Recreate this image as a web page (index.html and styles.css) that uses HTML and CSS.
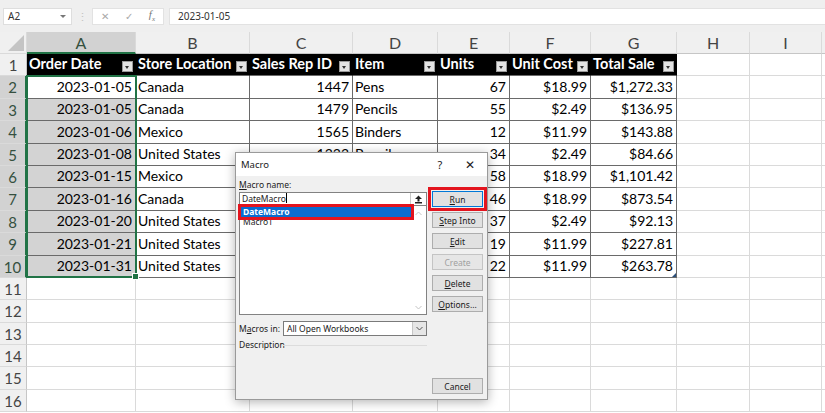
FILE: index.html
```html
<!DOCTYPE html>
<html lang="en">
    <head>
        <meta charset="UTF-8">
        <title>Macro</title>
        <link rel="stylesheet" href="styles.css">
    </head>
    <body>
        <div class="toolbar">
            <div class="namebox">A2<span class="namebox-arrow"></span></div>
            <div class="grip">⋮</div>
            <div class="fxbox">
                <span class="fx-icon">✕</span>
                <span class="fx-icon">✓</span>
                <span class="fx-icon fx">f<sub>x</sub></span>
            </div>
            <div class="formula">2023-01-05</div>
        </div>

        <div class="sheet">
            <div class="grid" id="grid"></div>
            <div class="selection"><span class="handle"></span></div>

            <div class="dialog">
                <div class="dlg-title">
                    <span class="dlg-name">Macro</span>
                    <span class="dlg-help">?</span>
                    <span class="dlg-close">✕</span>
                </div>
                <div class="dlg-body">
                    <div class="dlg-left">
                        <div class="dlg-label"><u>M</u>acro name:</div>
                        <div class="name-input">
                            <span class="name-text">DateMacro<i class="caret"></i></span>
                            <span class="collapse">
                                <svg width="9" height="9" viewBox="0 0 9 9"><path d="M4.5 0.5 L1 4 H8 Z M3.5 4 H5.5 V6.5 H3.5 Z M1 7 H8 V8.5 H1 Z" fill="#222"/></svg>
                            </span>
                        </div>
                        <div class="macro-list">
                            <div class="items">
                                <div class="item active">DateMacro</div>
                                <div class="item">Macro1</div>
                            </div>
                            <div class="vscroll">
                                <svg width="7" height="5" viewBox="0 0 7 5"><path d="M0.5 4 L3.5 1 L6.5 4" fill="none" stroke="#c4c4c4"/></svg>
                                <svg width="7" height="5" viewBox="0 0 7 5"><path d="M0.5 1 L3.5 4 L6.5 1" fill="none" stroke="#c4c4c4"/></svg>
                            </div>
                        </div>
                        <div class="macros-in">
                            <span class="dlg-label">M<u>a</u>cros in:</span>
                            <div class="select">
                                <span>All Open Workbooks</span>
                                <span class="select-btn">
                                    <svg width="7" height="5" viewBox="0 0 7 5"><path d="M0.5 1 L3.5 4 L6.5 1" fill="none" stroke="#555"/></svg>
                                </span>
                            </div>
                        </div>
                        <div class="desc">
                            <span class="dlg-label">Description</span>
                            <i class="desc-line"></i>
                        </div>
                    </div>
                    <div class="dlg-right">
                        <button class="btn run"><u>R</u>un</button>
                        <button class="btn"><u>S</u>tep Into</button>
                        <button class="btn"><u>E</u>dit</button>
                        <button class="btn disabled">Create</button>
                        <button class="btn"><u>D</u>elete</button>
                        <button class="btn"><u>O</u>ptions...</button>
                        <button class="btn cancel">Cancel</button>
                    </div>
                </div>
            </div>
        </div>

        <script>
            const letters = ['A', 'B', 'C', 'D', 'E', 'F', 'G', 'H', 'I', ''];
            const header = ['Order Date', 'Store Location', 'Sales Rep ID', 'Item', 'Units', 'Unit Cost', 'Total Sale'];
            const numeric = [true, false, true, false, true, true, true];
            const data = [
                ['2023-01-05', 'Canada', 1447, 'Pens', 67, '$18.99', '$1,272.33'],
                ['2023-01-05', 'Canada', 1479, 'Pencils', 55, '$2.49', '$136.95'],
                ['2023-01-06', 'Mexico', 1565, 'Binders', 12, '$11.99', '$143.88'],
                ['2023-01-08', 'United States', 1333, 'Pencils', 34, '$2.49', '$84.66'],
                ['2023-01-15', 'Mexico', 1447, 'Pens', 58, '$18.99', '$1,101.42'],
                ['2023-01-16', 'Canada', 1479, 'Pens', 46, '$18.99', '$873.54'],
                ['2023-01-20', 'United States', 1333, 'Pencils', 37, '$2.49', '$92.13'],
                ['2023-01-21', 'United States', 1565, 'Binders', 19, '$11.99', '$227.81'],
                ['2023-01-31', 'United States', 1333, 'Binders', 22, '$11.99', '$263.78'],
            ];

            const grid = document.getElementById('grid');
            function add(cls, text) {
                const el = document.createElement('div');
                el.className = cls;
                if (text !== undefined) el.textContent = text;
                grid.appendChild(el);
                return el;
            }

            add('corner');
            letters.forEach((l, i) => add('ch' + (i === 0 ? ' sel' : ''), l));

            for (let r = 1; r <= 16; r++) {
                add('rh' + (r >= 2 && r <= 10 ? ' sel' : ''), r);
                letters.forEach((l, c) => {
                    let cls = 'cell';
                    if (r <= 10 && c < 7) cls += ' tbl';
                    if (r === 1 && c < 7) {
                        const el = add(cls + ' head');
                        el.innerHTML = '<span>' + header[c] + '</span><span class="filter"></span>';
                        return;
                    }
                    let text;
                    if (r >= 2 && r <= 10 && c < 7) {
                        text = data[r - 2][c];
                        if (numeric[c]) cls += ' num';
                        if (c === 0 && r > 2) cls += ' picked';
                        if (c === 6 && r === 10) cls += ' last';
                    }
                    add(cls, text);
                });
            }
        </script>
    </body>
</html>
```

FILE: styles.css
```css
body {
    margin: 0;
    width: 825px;
    height: 413px;
    overflow: hidden;
    background: #fff;
    font-family: Lato, "Open Sans", sans-serif;
}
.toolbar {
    height: 32px;
    background: #efefef;
    display: flex;
    align-items: center;
    padding-left: 3px;
    box-sizing: border-box;
    font-family: "Noto Sans", sans-serif;
    font-size: 10px;
    color: #333;
}
.namebox {
    position: relative;
    width: 69px;
    height: 17px;
    background: #fff;
    border: 1px solid #dedede;
    box-sizing: border-box;
    padding-left: 4px;
    line-height: 15px;
}
.namebox-arrow {
    position: absolute;
    right: 5px;
    top: 6px;
    border: 3px solid transparent;
    border-top: 3px solid #777;
}
.grip {
    width: 20px;
    text-align: center;
    color: #c2c2c2;
    font-size: 11px;
}
.fxbox {
    width: 72px;
    height: 17px;
    background: #fff;
    border: 1px solid #e2e2e2;
    box-sizing: border-box;
    display: flex;
    align-items: center;
    justify-content: space-around;
    color: #a8a8a8;
    font-size: 10px;
}
.fx {
    font-family: "Liberation Serif", serif;
    font-style: italic;
    color: #777;
    font-size: 11px;
}
.fx sub {
    font-size: 7px;
}
.formula {
    flex: 1;
    height: 17px;
    margin-left: 5px;
    background: #fff;
    border: 1px solid #e2e2e2;
    border-right: 0;
    box-sizing: border-box;
    padding-left: 8px;
    line-height: 15px;
}

.sheet {
    position: relative;
    height: 381px;
    overflow: hidden;
}
.grid {
    display: grid;
    grid-template-columns: 27px 109px 114px 103px 85px 72px 81px 86px 73px 72px 1fr;
    grid-template-rows: 22px repeat(16, 22.4px);
}
.grid > div {
    box-sizing: border-box;
    border-right: 1px solid #dadada;
    border-bottom: 1px solid #dadada;
    white-space: nowrap;
    overflow: hidden;
}
.corner {
    background: #f0f0f0;
    position: relative;
}
.corner::after {
    content: "";
    position: absolute;
    right: 2px;
    bottom: 2px;
    border-left: 16px solid transparent;
    border-bottom: 16px solid #c4c4c4;
}
.grid > .ch {
    background: #f0f0f0;
    color: #444;
    font-size: 16px;
    text-align: center;
    line-height: 22px;
    border-bottom-color: #c6c6c6;
}
.grid > .ch.sel {
    background: #d2d2d2;
    color: #35503f;
    border-bottom: 2px solid #217346;
}
.grid > .rh {
    background: #f0f0f0;
    color: #444;
    font-size: 15px;
    text-align: center;
    line-height: 22px;
    border-right-color: #c6c6c6;
}
.grid > .rh.sel {
    background: #d2d2d2;
    color: #35503f;
    border-right: 2px solid #217346;
}
.cell {
    display: flex;
    align-items: flex-end;
    padding: 0 3px 2px 2px;
    font-size: 14px;
    line-height: 18px;
    color: #000;
}
.grid > .cell.tbl {
    border-color: #6a6a6a;
}
.cell.num {
    justify-content: flex-end;
}
.cell.picked {
    background: #d3d3d3;
}
.cell.last {
    position: relative;
}
.cell.last::after {
    content: "";
    position: absolute;
    right: 0;
    bottom: 0;
    border-left: 4px solid transparent;
    border-bottom: 4px solid #2b4f7a;
}
.grid > .cell.head {
    background: #000;
    color: #fff;
    font-weight: bold;
    font-size: 14.5px;
    justify-content: space-between;
    border-color: #000;
    border-bottom-color: #6a6a6a;
}
.filter {
    flex-shrink: 0;
    width: 11px;
    height: 11px;
    margin: 0 -1px 1px 2px;
    background: #e4e4e4;
    border: 1px solid #9a9a9a;
    box-sizing: border-box;
    position: relative;
}
.filter::after {
    content: "";
    position: absolute;
    left: 2px;
    top: 4px;
    border: 2.5px solid transparent;
    border-top: 3px solid #333;
}

.selection {
    position: absolute;
    left: 26px;
    top: 43px;
    width: 111px;
    height: 203px;
    border: 2px solid #217346;
    box-sizing: border-box;
}
.handle {
    position: absolute;
    right: -4px;
    bottom: -4px;
    width: 5px;
    height: 5px;
    background: #217346;
    border: 1px solid #fff;
}

.dialog {
    position: absolute;
    left: 235px;
    top: 120px;
    width: 253px;
    height: 248px;
    background: #f0f0f0;
    border: 1px solid #9a9a9a;
    box-sizing: border-box;
    box-shadow: 0 2px 10px rgba(0, 0, 0, 0.3);
    font-family: "Noto Sans", sans-serif;
    font-size: 8.5px;
    color: #1a1a1a;
    display: flex;
    flex-direction: column;
}
.dlg-title {
    height: 23px;
    background: #fff;
    display: flex;
    align-items: center;
    padding-left: 5px;
    font-size: 9.5px;
}
.dlg-name {
    flex: 1;
}
.dlg-help {
    width: 30px;
    text-align: center;
    font-size: 11px;
}
.dlg-close {
    width: 30px;
    text-align: center;
    font-size: 12px;
    margin-right: 2px;
}
.dlg-body {
    flex: 1;
    display: grid;
    grid-template-columns: 188px 51px;
    gap: 5px;
    padding: 0 0 5px 3px;
}
.dlg-left {
    display: flex;
    flex-direction: column;
}
.dlg-label {
    height: 12px;
    line-height: 12px;
    margin-top: 3px;
}
.name-input {
    display: flex;
    height: 13px;
    margin-top: 1px;
    background: #fff;
    border: 1px solid #828282;
    border-bottom: 0;
    box-sizing: border-box;
}
.name-text {
    flex: 1;
    padding-left: 2px;
    line-height: 11px;
}
.caret {
    display: inline-block;
    width: 1px;
    height: 10px;
    background: #000;
    vertical-align: -1px;
}
.collapse {
    width: 15px;
    border-left: 1px solid #c8c8c8;
    display: flex;
    align-items: center;
    justify-content: center;
}
.macro-list {
    display: flex;
    height: 110px;
    background: #fff;
    border: 1px solid #828282;
    box-sizing: border-box;
}
.items {
    flex: 1;
    padding: 1px 0 0 1px;
}
.item {
    height: 10px;
    line-height: 10px;
    padding-left: 2px;
}
.item.active {
    background: #0a6cd0;
    color: #fff;
    font-weight: bold;
    outline: 3px solid #e3141e;
    outline-offset: 0;
}
.vscroll {
    width: 15px;
    display: flex;
    flex-direction: column;
    justify-content: space-between;
    align-items: center;
    padding: 5px 0 4px;
}
.macros-in {
    display: flex;
    align-items: center;
    gap: 2px;
    margin-top: 6px;
}
.macros-in .dlg-label {
    margin-top: 0;
    width: 42px;
}
.select {
    flex: 1;
    height: 15px;
    background: #fff;
    border: 1px solid #7a7a7a;
    box-sizing: border-box;
    display: flex;
    align-items: center;
    padding-left: 3px;
}
.select span:first-child {
    flex: 1;
}
.select-btn {
    width: 13px;
    height: 13px;
    background: #e6e6e6;
    border-left: 1px solid #c6c6c6;
    display: flex;
    align-items: center;
    justify-content: center;
}
.desc {
    display: flex;
    align-items: center;
    gap: 2px;
}
.desc .dlg-label {
    width: 42px;
}
.desc-line {
    flex: 1;
    height: 1px;
    margin-top: 3px;
    background: #dcdcdc;
}
.dlg-right {
    display: flex;
    flex-direction: column;
    gap: 5px;
    padding-top: 15px;
}
.btn {
    height: 16px;
    padding: 0;
    background: #e1e1e1;
    border: 1px solid #adadad;
    font-family: "Noto Sans", sans-serif;
    font-size: 8.5px;
    color: #1a1a1a;
}
.btn.run {
    border-color: #0078d7;
    outline: 3px solid #e3141e;
    outline-offset: 1px;
}
.btn.disabled {
    color: #a0a0a0;
    border-color: #c4c4c4;
    background: #e6e6e6;
}
.btn.cancel {
    margin-top: auto;
}
```
